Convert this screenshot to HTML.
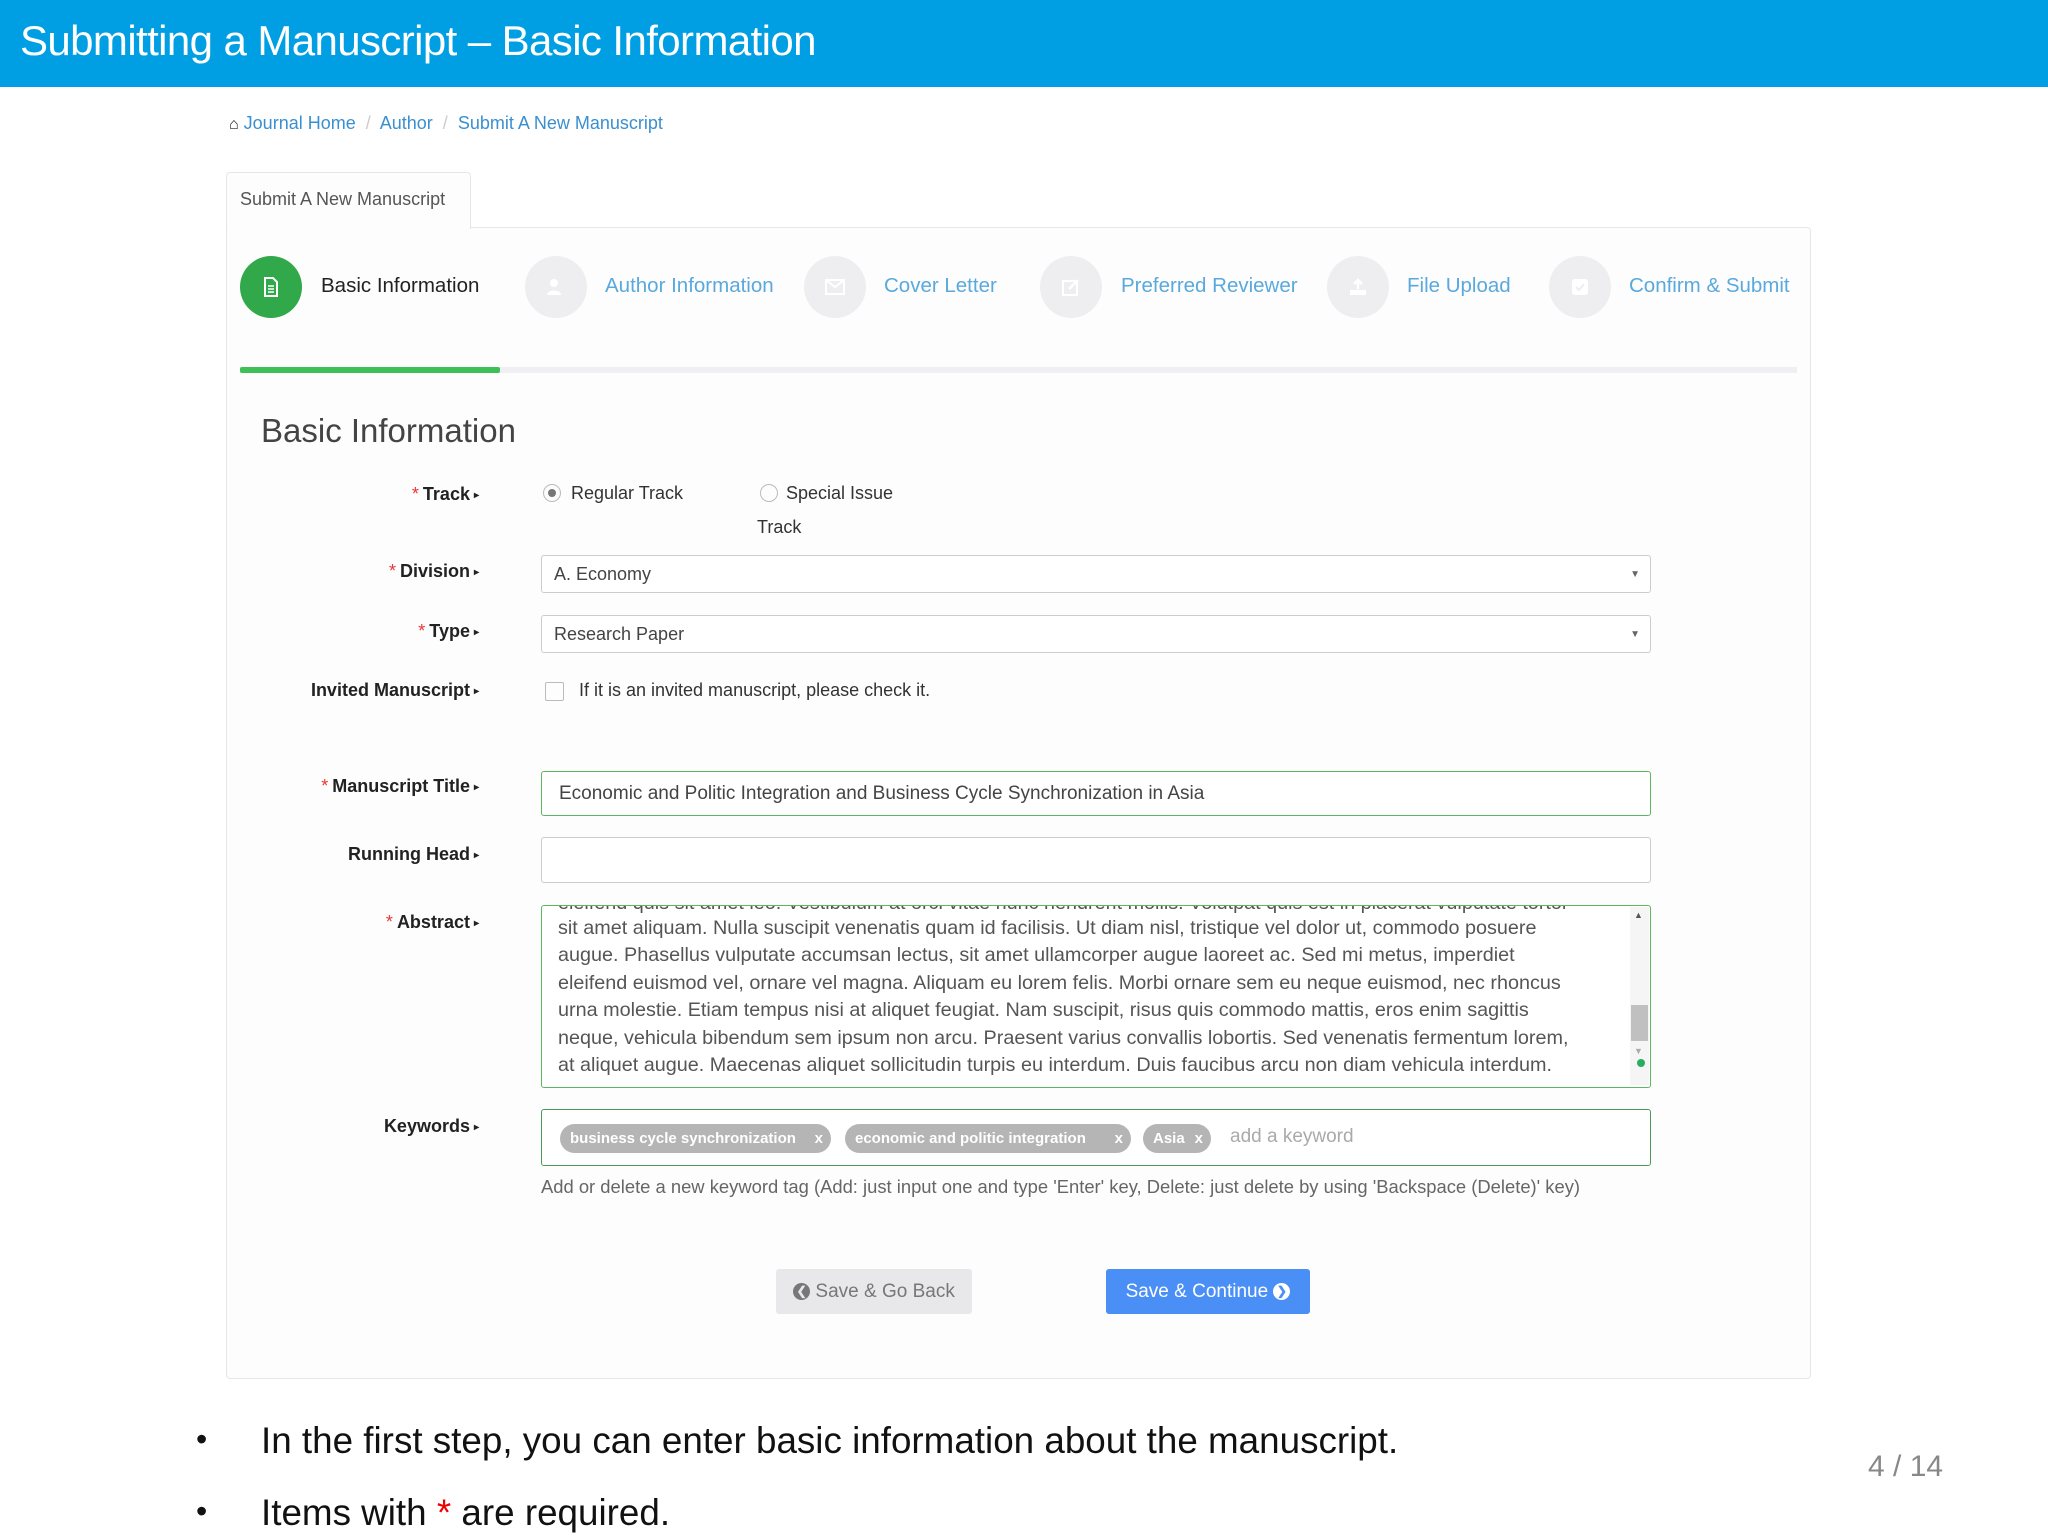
<!DOCTYPE html>
<html><head><meta charset="utf-8"><style>
*{margin:0;padding:0;box-sizing:border-box}
body{width:2048px;height:1536px;background:#fff;font-family:"Liberation Sans",sans-serif;position:relative;overflow:hidden;color:#333}
.a{position:absolute;white-space:nowrap}
.hdr{left:0;top:0;width:2048px;height:87px;background:#009fe3}
.lbl{font-weight:bold;font-size:18px;color:#222;text-align:right;right:1569px}
.lbl .s{color:#e33;font-weight:normal;margin-right:4px}
.lbl .t{font-size:10px;margin-left:4px;vertical-align:2px}
.inp{left:541px;width:1110px;border:1.5px solid #ccc;border-radius:3px;background:#fff;font-size:18px;color:#444;padding-left:12px;display:flex;align-items:center}
.circ{width:62px;height:62px;border-radius:50%;background:#eeedf0;top:256px;display:flex;align-items:center;justify-content:center}
.sl{top:274px;font-size:20.5px;color:#59a9dc}
.tag{top:1124px;height:29px;border-radius:15px;background:#b5b5b5;color:#fff;font-weight:bold;font-size:15px;line-height:29px;padding-left:10px}
.tag span{position:absolute;right:8px;font-weight:bold}
.ab{left:15px;font-size:19.8px;color:#555}
</style></head><body>
<div class="a hdr"></div>
<div class="a" style="left:20px;top:17px;font-size:42px;color:#fff;letter-spacing:-0.6px">Submitting a Manuscript – Basic Information</div>

<div class="a" style="left:229px;top:113px;font-size:18px;color:#3a8fd0"><span style="color:#222;font-size:16px">&#8962;</span> Journal Home <span style="color:#ccc">&nbsp;/&nbsp;</span> Author <span style="color:#ccc">&nbsp;/&nbsp;</span> Submit A New Manuscript</div>

<div class="a" style="left:226px;top:227px;width:1585px;height:1152px;border:1.5px solid #e6e6ea;border-radius:4px;background:#fdfdfe"></div>
<div class="a" style="left:226px;top:172px;width:245px;height:57px;border:1.5px solid #e6e6ea;border-bottom:none;border-radius:4px 4px 0 0;background:#fdfdfe;font-size:18px;color:#555;padding:16px 0 0 13px">Submit A New Manuscript</div>

<div class="a circ" style="left:240px;background:#31a84a"><svg width="16" height="20" viewBox="0 0 16 20"><path d="M2 1h8l4 4v14H2z" fill="none" stroke="#fff" stroke-width="2"/><path d="M5 9h6M5 12h6M5 15h6" stroke="#fff" stroke-width="1.6"/></svg></div>
<div class="a sl" style="left:321px;color:#222">Basic Information</div>
<div class="a circ" style="left:525px"><svg width="20" height="18"><circle cx="8" cy="5" r="4" fill="#fff"/><path d="M1 17c0-6 14-6 14 0z" fill="#fff"/></svg></div><div class="a sl" style="left:605px">Author Information</div>
<div class="a circ" style="left:804px"><svg width="20" height="16"><rect x="1" y="1" width="18" height="14" fill="none" stroke="#fff" stroke-width="2"/><path d="M1 1l9 7 9-7" fill="none" stroke="#fff" stroke-width="2"/></svg></div><div class="a sl" style="left:884px">Cover Letter</div>
<div class="a circ" style="left:1040px"><svg width="18" height="18"><rect x="1" y="3" width="14" height="14" fill="none" stroke="#fff" stroke-width="2"/><path d="M7 11l9-9" stroke="#fff" stroke-width="2.5"/></svg></div><div class="a sl" style="left:1121px">Preferred Reviewer</div>
<div class="a circ" style="left:1327px"><svg width="18" height="18"><path d="M9 2v9M5 6l4-4 4 4" stroke="#fff" stroke-width="2.5" fill="none"/><rect x="1" y="12" width="16" height="5" fill="#fff"/></svg></div><div class="a sl" style="left:1407px">File Upload</div>
<div class="a circ" style="left:1549px"><svg width="18" height="18"><rect x="1" y="1" width="16" height="16" rx="3" fill="#fff"/><path d="M5 9l3 3 5-6" stroke="#eeedf0" stroke-width="2" fill="none"/></svg></div><div class="a sl" style="left:1629px">Confirm &amp; Submit</div>

<div class="a" style="left:240px;top:367px;width:1557px;height:6px;background:#f0eff2"></div>
<div class="a" style="left:240px;top:367px;width:260px;height:6px;background:#3cc057;border-radius:2px"></div>

<div class="a" style="left:261px;top:412px;font-size:33px;color:#444">Basic Information</div>

<div class="a lbl" style="top:484px"><span class="s">*</span>Track<span class="t">&#9656;</span></div>
<div class="a lbl" style="top:561px"><span class="s">*</span>Division<span class="t">&#9656;</span></div>
<div class="a lbl" style="top:621px"><span class="s">*</span>Type<span class="t">&#9656;</span></div>
<div class="a lbl" style="top:680px">Invited Manuscript<span class="t">&#9656;</span></div>
<div class="a lbl" style="top:776px"><span class="s">*</span>Manuscript Title<span class="t">&#9656;</span></div>
<div class="a lbl" style="top:844px">Running Head<span class="t">&#9656;</span></div>
<div class="a lbl" style="top:912px"><span class="s">*</span>Abstract<span class="t">&#9656;</span></div>
<div class="a lbl" style="top:1116px">Keywords<span class="t">&#9656;</span></div>

<div class="a" style="left:543px;top:484px;width:18px;height:18px;border:1.5px solid #bbb;border-radius:50%"><div style="margin:3.5px;width:8px;height:8px;border-radius:50%;background:#777"></div></div>
<div class="a" style="left:571px;top:483px;font-size:18px;color:#333">Regular Track</div>
<div class="a" style="left:760px;top:484px;width:18px;height:18px;border:1.5px solid #bbb;border-radius:50%"></div>
<div class="a" style="left:786px;top:483px;font-size:18px;color:#333">Special Issue</div>
<div class="a" style="left:757px;top:517px;font-size:18px;color:#333">Track</div>

<div class="a inp" style="top:555px;height:38px">A. Economy<span style="position:absolute;right:10px;font-size:10px;color:#666">&#9660;</span></div>
<div class="a inp" style="top:615px;height:38px">Research Paper<span style="position:absolute;right:10px;font-size:10px;color:#666">&#9660;</span></div>

<div class="a" style="left:545px;top:682px;width:19px;height:19px;border:1.5px solid #bbb;border-radius:2px"></div>
<div class="a" style="left:579px;top:680px;font-size:18px;color:#333">If it is an invited manuscript, please check it.</div>

<div class="a inp" style="top:771px;height:45px;border-color:#5cb85c;padding-left:17px;font-size:19px">Economic and Politic Integration and Business Cycle Synchronization in Asia</div>
<div class="a inp" style="top:837px;height:46px"></div>

<div class="a" style="left:541px;top:905px;width:1110px;height:183px;border:1.5px solid #5cb85c;border-radius:3px;background:#fff;overflow:hidden"></div>
<div class="a" style="left:543px;top:906px;width:1085px;height:180px;overflow:hidden">
<div class="a ab" style="top:-14px">eleifend quis sit amet leo. Vestibulum at orci vitae nunc hendrerit mollis. Volutpat quis est in placerat vulputate tortor</div>
<div class="a ab" style="top:11px">sit amet aliquam. Nulla suscipit venenatis quam id facilisis. Ut diam nisl, tristique vel dolor ut, commodo posuere</div>
<div class="a ab" style="top:38px">augue. Phasellus vulputate accumsan lectus, sit amet ullamcorper augue laoreet ac. Sed mi metus, imperdiet</div>
<div class="a ab" style="top:66px">eleifend euismod vel, ornare vel magna. Aliquam eu lorem felis. Morbi ornare sem eu neque euismod, nec rhoncus</div>
<div class="a ab" style="top:93px">urna molestie. Etiam tempus nisi at aliquet feugiat. Nam suscipit, risus quis commodo mattis, eros enim sagittis</div>
<div class="a ab" style="top:121px">neque, vehicula bibendum sem ipsum non arcu. Praesent varius convallis lobortis. Sed venenatis fermentum lorem,</div>
<div class="a ab" style="top:148px">at aliquet augue. Maecenas aliquet sollicitudin turpis eu interdum. Duis faucibus arcu non diam vehicula interdum.</div>
</div>
<div class="a" style="left:1630px;top:907px;width:19px;height:178px;background:#f5f5f5"></div>
<div class="a" style="left:1634px;top:910px;font-size:9px;color:#555">&#9650;</div>
<div class="a" style="left:1631px;top:1005px;width:17px;height:36px;background:#c0c0c0"></div>
<div class="a" style="left:1634px;top:1046px;font-size:9px;color:#aaa">&#9660;</div>
<div class="a" style="left:1637px;top:1059px;width:8px;height:8px;border-radius:50%;background:#27ae60"></div>

<div class="a" style="left:541px;top:1109px;width:1110px;height:57px;border:1.5px solid #4a9a5a;border-radius:3px;background:#fff"></div>
<div class="a tag" style="left:560px;width:271px">business cycle synchronization<span>x</span></div>
<div class="a tag" style="left:845px;width:286px">economic and politic integration<span>x</span></div>
<div class="a tag" style="left:1143px;width:68px">Asia<span>x</span></div>
<div class="a" style="left:1230px;top:1126px;font-size:19px;color:#aaa">add a keyword</div>
<div class="a" style="left:541px;top:1176px;font-size:18.4px;color:#666">Add or delete a new keyword tag (Add: just input one and type 'Enter' key, Delete: just delete by using 'Backspace (Delete)' key)</div>

<div class="a" style="left:776px;top:1269px;width:196px;height:45px;background:#e8e7ea;border-radius:3px;font-size:19px;color:#777;display:flex;align-items:center;justify-content:center"><span style="display:inline-block;width:17px;height:17px;border-radius:50%;background:#777;color:#e8e7ea;font-size:12px;line-height:17px;text-align:center;font-weight:bold">&#10094;</span>&nbsp;Save &amp; Go Back</div>
<div class="a" style="left:1106px;top:1269px;width:204px;height:45px;background:#4a8ff5;border-radius:3px;font-size:19px;color:#fff;display:flex;align-items:center;justify-content:center">Save &amp; Continue&nbsp;<span style="display:inline-block;width:17px;height:17px;border-radius:50%;background:#fff;color:#4a8ff5;font-size:12px;line-height:17px;text-align:center;font-weight:bold">&#10095;</span></div>

<div class="a" style="left:196px;top:1421px;font-size:32px;color:#111">•</div>
<div class="a" style="left:261px;top:1420px;font-size:36.8px;color:#111">In the first step, you can enter basic information about the manuscript.</div>
<div class="a" style="left:196px;top:1493px;font-size:32px;color:#111">•</div>
<div class="a" style="left:261px;top:1492px;font-size:36.8px;color:#111">Items with <span style="color:#e00">*</span> are required.</div>
<div class="a" style="left:1868px;top:1450px;font-size:30px;color:#888">4 / 14</div>
</body></html>
